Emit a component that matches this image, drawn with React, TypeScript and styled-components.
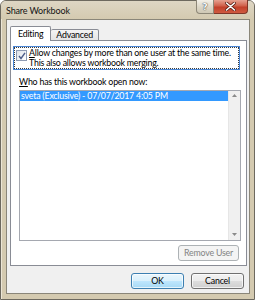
import React from "react";
import styled, { createGlobalStyle } from "styled-components";

const GlobalStyle = createGlobalStyle`
  html, body { margin: 0; padding: 0; background: #ffffff; }
  body {
    font-family: Lato, "Liberation Sans", sans-serif;
    font-size: 8.8px;
    letter-spacing: -0.2px;
    color: #000;
  }
  * { box-sizing: border-box; }
`;

const Window = styled.div`
  width: 255px;
  height: 300px;
  display: flex;
  flex-direction: column;
  background: #d4cab0;
  border: 1px solid #6d695f;
  border-radius: 6px 6px 0 0;
  padding: 0 4px 5px 5px;
  box-shadow: inset 1px 1px 0 #ece6d6;
`;

const TitleBar = styled.div`
  height: 18px;
  display: flex;
  align-items: flex-start;
  background: linear-gradient(#ddd6c4, #d4cab0);
  margin: 0 -4px 0 -5px;
  padding: 0 6px 0 5px;
  border-radius: 5px 5px 0 0;
`;

const Title = styled.span`
  padding-top: 5px;
  font-size: 9px;
  letter-spacing: -0.15px;
  line-height: 10px;
  color: #141414;
`;

const CaptionButtons = styled.div`
  margin-left: auto;
  margin-top: -1px;
  display: flex;
`;

const HelpButton = styled.div`
  width: 18px;
  height: 14px;
  border: 1px solid #8d8777;
  border-top: none;
  border-radius: 0 0 0 4px;
  background: linear-gradient(#f3f0e8, #dcd6c6 55%, #cfc8b5);
  display: flex;
  align-items: center;
  justify-content: center;
  font-family: "DejaVu Sans", sans-serif;
  font-size: 9px;
  font-weight: bold;
  color: #fafafa;
  text-shadow: 0 0 1px #3b3b3b, 0 0 1px #3b3b3b;
`;

const CloseButton = styled.div`
  width: 34px;
  height: 14px;
  border: 1px solid #7f3627;
  border-top: none;
  border-left: none;
  border-radius: 0 0 4px 0;
  background: linear-gradient(#e6a190, #d0614b 45%, #c2402a 55%, #cf5a40);
  display: flex;
  align-items: center;
  justify-content: center;
`;

const Client = styled.div`
  flex: 1;
  display: flex;
  flex-direction: column;
  background: #f0f0f0;
  border: 1px solid #8a8679;
  padding: 6px 2px 4px 3px;
`;

const TabRow = styled.div`
  display: flex;
  align-items: flex-end;
  height: 15px;
  margin-bottom: -1px;
  position: relative;
  z-index: 1;
`;

const Tab = styled.div<{ $active?: boolean }>`
  height: ${(p) => (p.$active ? "15px" : "12px")};
  padding: ${(p) => (p.$active ? "2px 7px 0 7px" : "0 5px")};
  line-height: 10px;
  border: 1px solid #898c95;
  border-bottom: ${(p) => (p.$active ? "none" : "1px solid #898c95")};
  border-left: ${(p) => (p.$active ? "1px solid #898c95" : "none")};
  background: ${(p) => (p.$active ? "#ffffff" : "linear-gradient(#f4f4f4, #e4e4e4)")};
  border-radius: 2px 2px 0 0;
`;

const Panel = styled.div`
  display: flex;
  flex-direction: column;
  background: #ffffff;
  border: 1px solid #898c95;
  padding: 5px 0 4px 2px;
`;

const FocusGroup = styled.div`
  width: 227px;
  border: 1px solid #4a86d6;
`;

const FocusInner = styled.div`
  display: flex;
  align-items: flex-start;
  gap: 2px;
  border: 1px dotted #3a3a3a;
  padding: 0 2px 0 1px;
`;

const CheckBox = styled.div`
  flex: none;
  width: 11px;
  height: 11px;
  margin-top: 2px;
  border: 1px solid #8f9bb3;
  background: linear-gradient(135deg, #dfe3ea, #ffffff);
  display: flex;
  align-items: center;
  justify-content: center;
`;

const CheckText = styled.div`
  line-height: 10px;
  white-space: nowrap;
`;

const Label = styled.div`
  margin: 7px 0 0 6px;
  line-height: 10px;
`;

const ListBox = styled.div`
  display: flex;
  width: 222px;
  height: 151px;
  margin: 3px 0 0 6px;
  border: 1px solid #a5a8b0;
  background: #ffffff;
`;

const ListItems = styled.div`
  flex: 1;
`;

const ListRow = styled.div<{ $selected?: boolean }>`
  height: 10px;
  line-height: 10px;
  padding-left: 1px;
  color: ${(p) => (p.$selected ? "#ffffff" : "#000000")};
  background: ${(p) => (p.$selected ? "#3399ff" : "transparent")};
  white-space: nowrap;
`;

const ScrollBar = styled.div`
  width: 12px;
  display: flex;
  flex-direction: column;
  justify-content: space-between;
  align-items: center;
  background: #f0f0f0;
  border-left: 1px solid #e6e6e6;
  padding: 3px 0 4px;
`;

const Button = styled.div<{ $variant?: "default" | "disabled" | "normal" }>`
  height: 16px;
  display: flex;
  align-items: center;
  justify-content: center;
  line-height: 10px;
  border-radius: 3px;
  border: 1px solid
    ${(p) => (p.$variant === "default" ? "#3c7fb1" : p.$variant === "disabled" ? "#adb2b5" : "#707070")};
  background: ${(p) =>
    p.$variant === "default"
      ? "linear-gradient(#eaf6fd, #d9f0fc 50%, #bee6fd 51%, #a7d9f5)"
      : p.$variant === "disabled"
      ? "#f4f4f4"
      : "linear-gradient(#f2f2f2, #ebebeb 50%, #dddddd 51%, #cfcfcf)"};
  color: ${(p) => (p.$variant === "disabled" ? "#838383" : "#000000")};
  box-shadow: ${(p) => (p.$variant === "disabled" ? "none" : "inset 0 0 0 1px rgba(255,255,255,0.7)")};
`;

const RemoveButton = styled(Button)`
  width: 61px;
  align-self: flex-end;
  margin: 4px 7px 0 0;
`;

const ButtonRow = styled.div`
  display: flex;
  justify-content: flex-end;
  gap: 7px;
  margin-top: 7px;
  padding-right: 3px;
`;

const DialogButton = styled(Button)`
  width: 53px;
`;

const U = styled.span`
  text-decoration: underline;
`;

const Arrow = ({ down }: { down?: boolean }) => (
  <svg width="5" height="3" viewBox="0 0 5 3">
    <path d={down ? "M0 0 L5 0 L2.5 3 Z" : "M0 3 L5 3 L2.5 0 Z"} fill="#8a8a8a" />
  </svg>
);

export default function App() {
  return (
    <>
      <GlobalStyle />
      <Window>
        <TitleBar>
          <Title>Share Workbook</Title>
          <CaptionButtons>
            <HelpButton>?</HelpButton>
            <CloseButton>
              <svg width="11" height="9" viewBox="0 0 11 9">
                <path d="M1.5 1 L9.5 8 M9.5 1 L1.5 8" stroke="#5b2016" strokeWidth="3" strokeLinecap="round" />
                <path d="M1.5 1 L9.5 8 M9.5 1 L1.5 8" stroke="#ffffff" strokeWidth="1.6" strokeLinecap="round" />
              </svg>
            </CloseButton>
          </CaptionButtons>
        </TitleBar>
        <Client>
          <TabRow>
            <Tab $active>Editing</Tab>
            <Tab>Advanced</Tab>
          </TabRow>
          <Panel>
            <FocusGroup>
              <FocusInner>
                <CheckBox>
                  <svg width="8" height="8" viewBox="0 0 8 8">
                    <path d="M1 4 L3 6.5 L7 0.8" fill="none" stroke="#4d5d8a" strokeWidth="1.4" />
                  </svg>
                </CheckBox>
                <CheckText>
                  <U>A</U>llow changes by more than one user at the same time.
                  <br />
                  This also allows workbook merging.
                </CheckText>
              </FocusInner>
            </FocusGroup>
            <Label>
              <U>W</U>ho has this workbook open now:
            </Label>
            <ListBox>
              <ListItems>
                <ListRow $selected>sveta (Exclusive) - 07/07/2017 4:05 PM</ListRow>
              </ListItems>
              <ScrollBar>
                <Arrow />
                <Arrow down />
              </ScrollBar>
            </ListBox>
            <RemoveButton $variant="disabled">Remove User</RemoveButton>
          </Panel>
          <ButtonRow>
            <DialogButton $variant="default">OK</DialogButton>
            <DialogButton>Cancel</DialogButton>
          </ButtonRow>
        </Client>
      </Window>
    </>
  );
}
